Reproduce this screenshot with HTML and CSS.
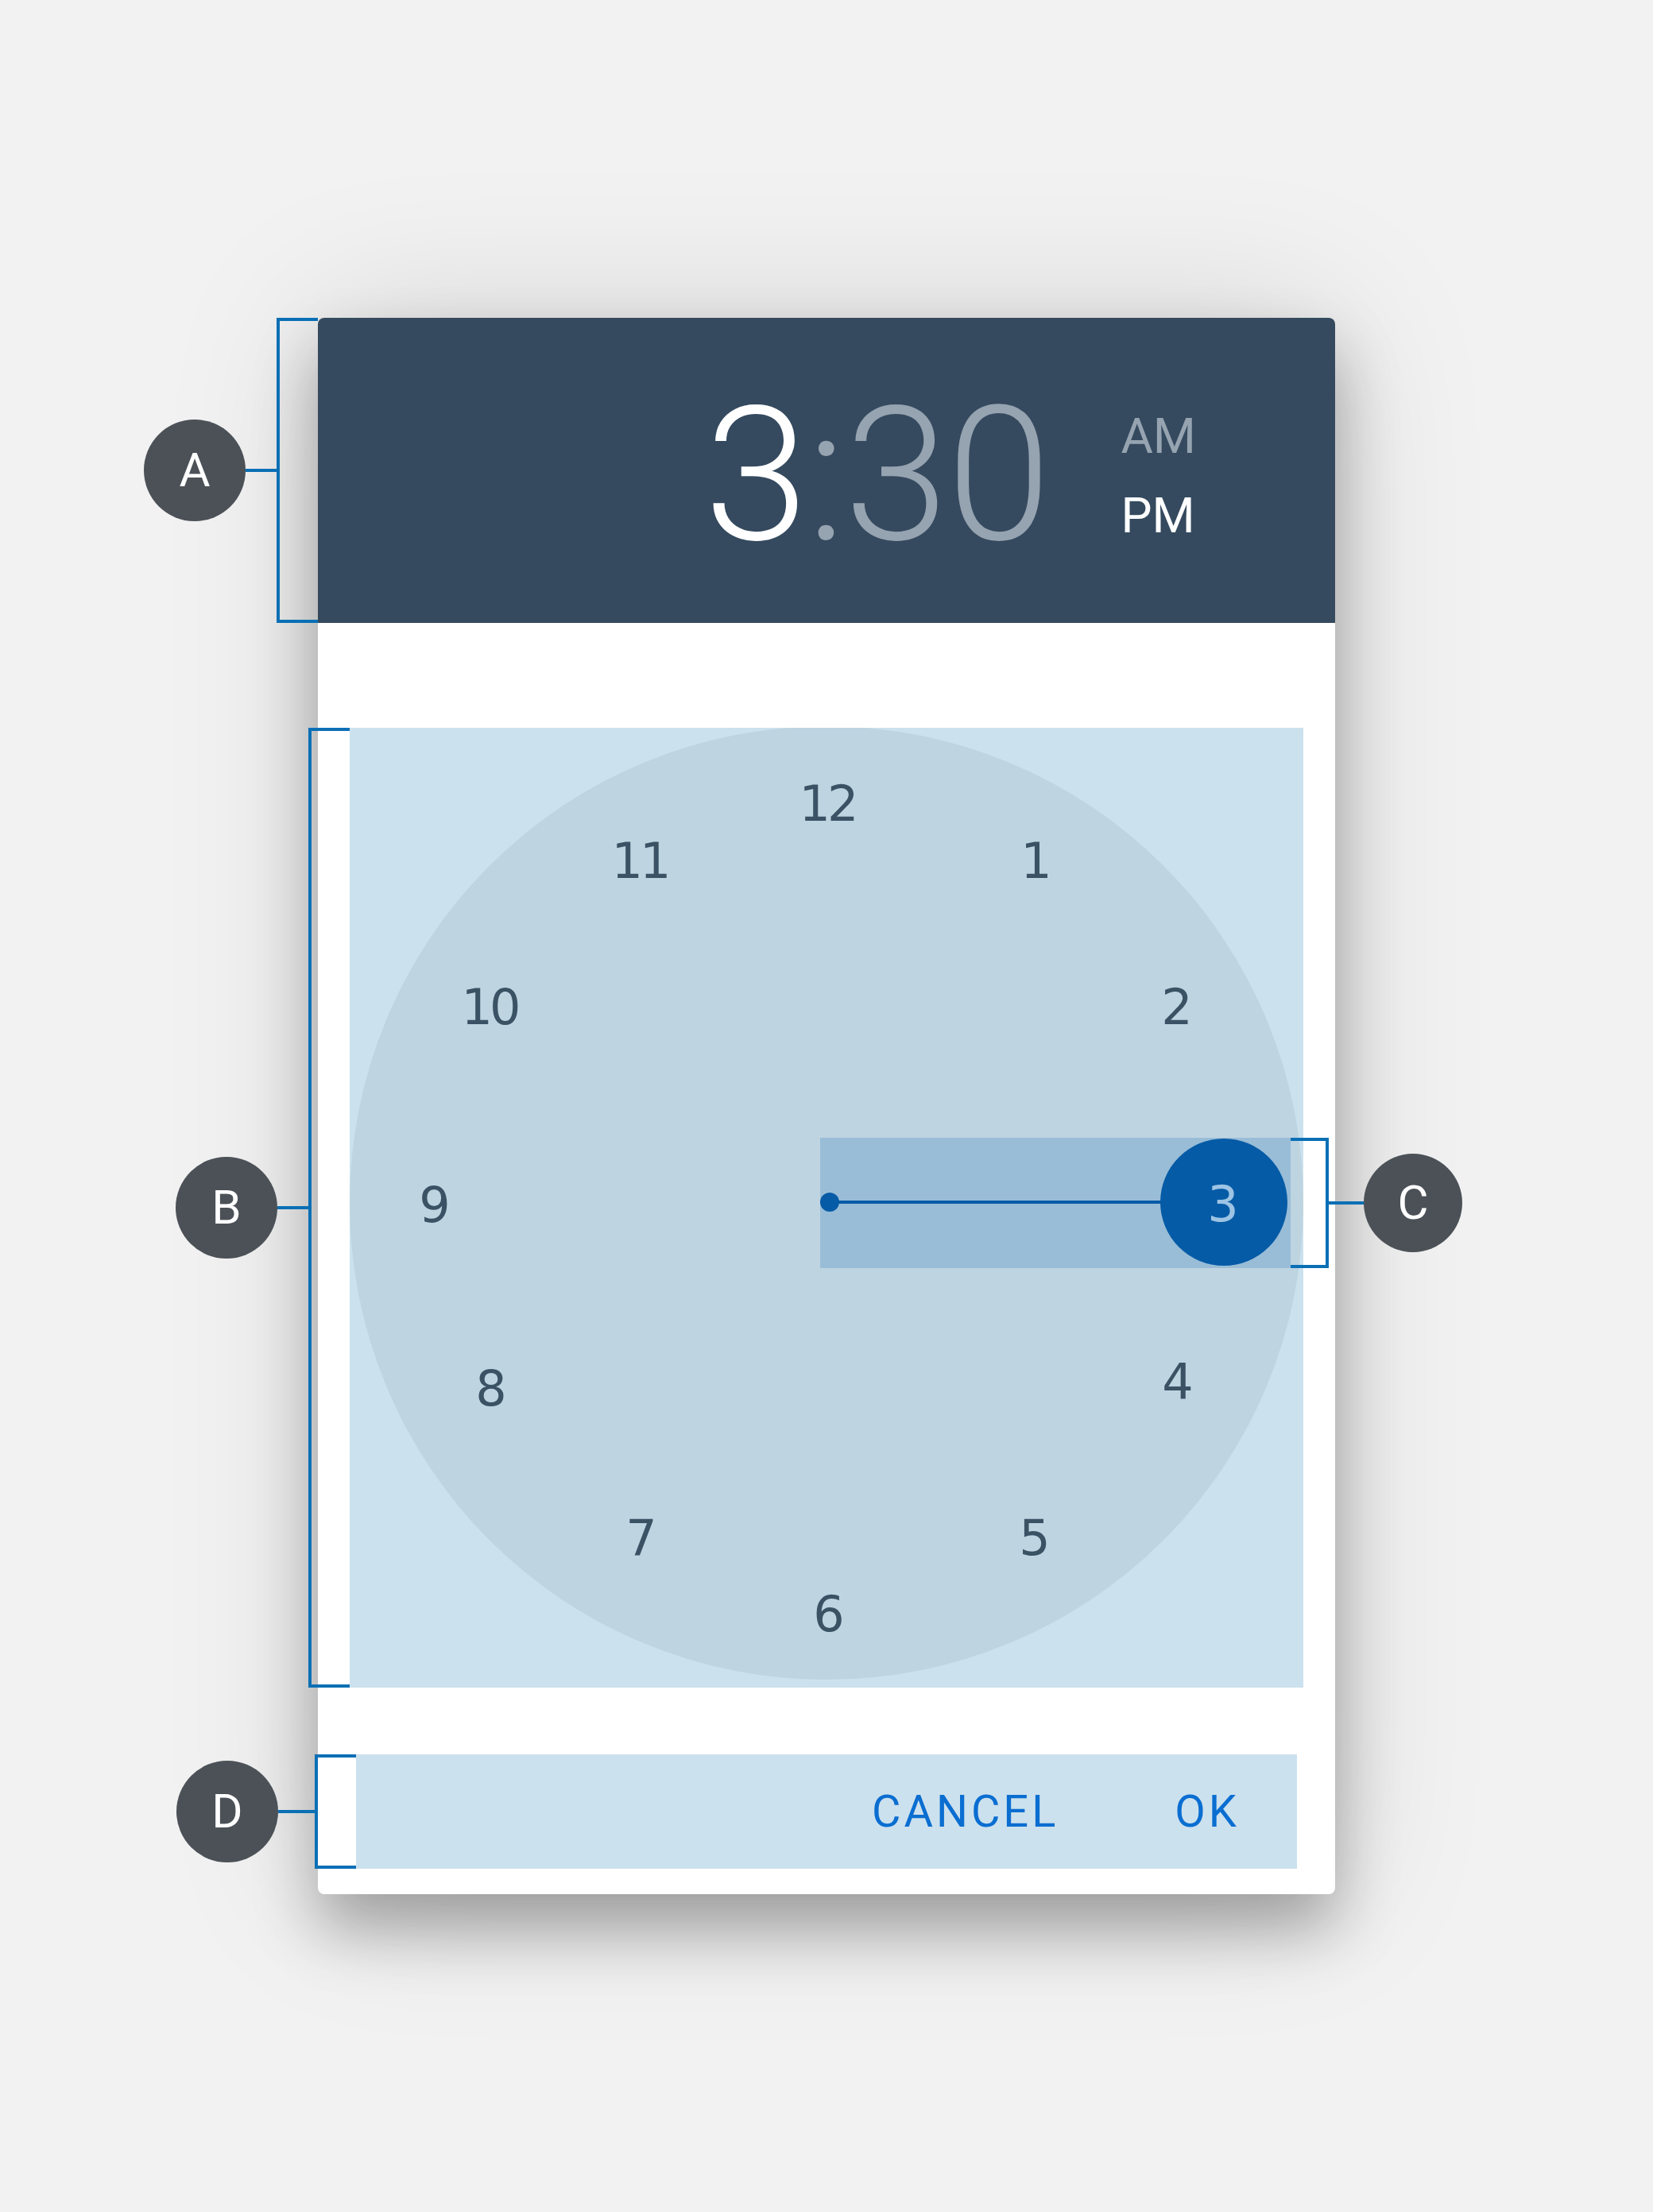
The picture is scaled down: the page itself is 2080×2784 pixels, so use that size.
FILE: index.html
```html
<!DOCTYPE html>
<html lang="en">
<head>
<meta charset="utf-8">
<title>Time Picker</title>
<link rel="stylesheet" href="styles.css">
</head>
<body>
<main class="stage">
  <section class="dialog" aria-label="Select time">
    <header class="dialog-header">
      <div class="time"><span class="time-hour">3</span><span class="time-rest">:30</span></div>
      <div class="period">
        <span class="period-item">AM</span>
        <span class="period-item is-active">PM</span>
      </div>
    </header>

    <div class="dialog-body">
      <div class="clock">
        <svg class="clock-face" viewBox="0 0 1200 1208" width="1200" height="1208">
          <circle class="dial" cx="600" cy="598" r="600"/>
          <rect class="hand-area" x="592" y="516" width="592" height="164"/>
          <line class="hand" x1="604" y1="597" x2="1040" y2="597"/>
          <circle class="hub" cx="604" cy="597" r="12"/>
          <circle class="knob" cx="1100" cy="597" r="80"/>
          <g class="hours">
            <text class="two-digit" x="601" y="117">12</text>
            <text x="864" y="189">1</text>
            <text x="1041" y="373">2</text>
            <text class="is-selected" x="1099" y="621">3</text>
            <text x="1042" y="845">4</text>
            <text x="862" y="1041">5</text>
            <text x="603" y="1137">6</text>
            <text x="367" y="1041">7</text>
            <text x="178" y="853">8</text>
            <text x="107" y="622">9</text>
            <text class="two-digit" x="176" y="373">10</text>
            <text class="two-digit" x="365" y="189">11</text>
          </g>
        </svg>
      </div>
    </div>

    <footer class="dialog-footer">
      <div class="actions">
        <button class="action" type="button">CANCEL</button>
        <button class="action" type="button">OK</button>
      </div>
    </footer>
  </section>

  <div class="callout callout-a">
    <span class="badge">A</span>
    <span class="leader"></span>
    <span class="bracket"></span>
  </div>

  <div class="callout callout-b">
    <span class="badge">B</span>
    <span class="leader"></span>
    <span class="bracket"></span>
  </div>

  <div class="callout callout-c">
    <span class="bracket bracket-right"></span>
    <span class="leader"></span>
    <span class="badge">C</span>
  </div>

  <div class="callout callout-d">
    <span class="badge">D</span>
    <span class="leader"></span>
    <span class="bracket"></span>
  </div>
</main>
</body>
</html>
```

FILE: styles.css
```css
* {
  box-sizing: border-box;
}

html,
body {
  margin: 0;
  padding: 0;
  background: #f2f2f2;
}

body {
  font-family: Roboto, "Liberation Sans", sans-serif;
}

.stage {
  position: relative;
  width: 2080px;
  height: 2784px;
  padding: 400px 0 0 400px;
  overflow: hidden;
}

/* Dialog card */
.dialog {
  width: 1280px;
  background: #ffffff;
  border-radius: 8px;
  overflow: hidden;
  box-shadow:
    0 44px 80px rgba(0, 0, 0, 0.3),
    0 0 200px rgba(0, 0, 0, 0.13);
}

/* Header with the selected time */
.dialog-header {
  height: 384px;
  background: #354a5f;
  display: flex;
  align-items: center;
  justify-content: flex-end;
  gap: 90px;
  padding: 14px 175px 0 0;
}

.time {
  font-family: Roboto, "Open Sans", sans-serif;
  font-weight: 300;
  font-size: 236px;
  line-height: 236px;
  letter-spacing: -2px;
  white-space: nowrap;
}

.time-hour {
  color: #ffffff;
}

.time-rest {
  color: #96a3b0;
}

.period {
  display: flex;
  flex-direction: column;
}

.period-item {
  display: block;
  font-family: Roboto, "Open Sans", sans-serif;
  font-weight: 400;
  font-size: 62px;
  line-height: 100px;
  color: #96a3b0;
}

.period-item.is-active {
  color: #ffffff;
}

/* Clock face */
.dialog-body {
  padding: 132px 40px 0;
}

.clock {
  height: 1208px;
  background: #cce1ee;
}

.clock-face {
  display: block;
}

.dial {
  fill: #bed4e1;
}

.hand-area {
  fill: #99bdd7;
}

.hand {
  stroke: #065ba6;
  stroke-width: 4;
}

.hub,
.knob {
  fill: #065ba6;
}

.hours text {
  font-family: "DejaVu Sans", sans-serif;
  font-size: 62px;
  fill: #3b5265;
  text-anchor: middle;
}

.hours text.two-digit {
  letter-spacing: -4px;
}

.hours text.is-selected {
  fill: #9dc4e4;
}

/* Footer actions */
.dialog-footer {
  padding: 84px 48px 32px;
}

.actions {
  height: 144px;
  background: #cce1ee;
  display: flex;
  align-items: center;
  justify-content: flex-end;
  gap: 146px;
  padding-right: 72px;
}

.action {
  border: none;
  background: none;
  padding: 0;
  margin: 0;
  font-family: Roboto, "Open Sans", sans-serif;
  font-weight: 400;
  font-size: 56px;
  line-height: 64px;
  letter-spacing: 4px;
  color: #0a6ed1;
  cursor: pointer;
}

/* Annotation callouts */
.callout {
  position: absolute;
  display: flex;
  align-items: center;
}

.badge {
  flex: none;
  width: 128px;
  height: 128px;
  border-radius: 50%;
  background: #4b5157;
  color: #ffffff;
  display: flex;
  align-items: center;
  justify-content: center;
  font-family: Roboto, "Open Sans", sans-serif;
  font-weight: 400;
  font-size: 60px;
  line-height: 1;
}

.leader {
  flex: none;
  height: 4px;
  background: #0a6fb5;
}

.bracket {
  flex: none;
  align-self: stretch;
  border: 4px solid #0a6fb5;
  border-right: none;
}

.bracket-right {
  border-left: none;
  border-right: 4px solid #0a6fb5;
}

.callout-a {
  left: 181px;
  top: 400px;
  height: 384px;
}

.callout-a .leader {
  width: 39px;
}

.callout-a .bracket {
  width: 52px;
}

.callout-b {
  left: 221px;
  top: 916px;
  height: 1208px;
}

.callout-b .leader {
  width: 39px;
}

.callout-b .bracket {
  width: 52px;
}

.callout-c {
  left: 1624px;
  top: 1432px;
  height: 164px;
}

.callout-c .bracket {
  width: 48px;
}

.callout-c .leader {
  width: 44px;
}

.callout-c .badge {
  width: 124px;
  height: 124px;
}

.callout-d {
  left: 222px;
  top: 2208px;
  height: 144px;
}

.callout-d .leader {
  width: 46px;
}

.callout-d .bracket {
  width: 52px;
}
```
